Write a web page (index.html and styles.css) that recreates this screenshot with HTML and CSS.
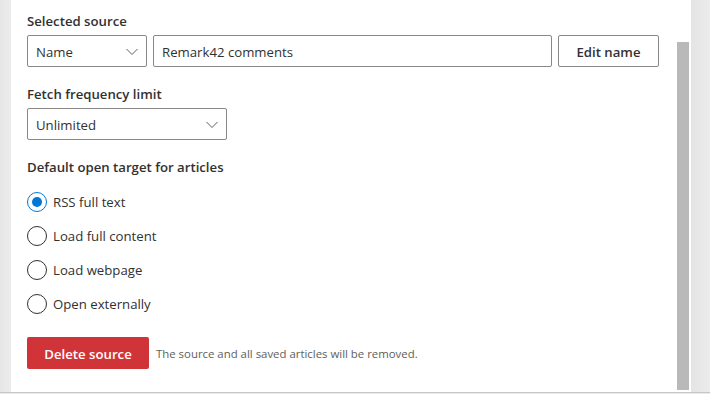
FILE: index.html
```html
<!DOCTYPE html>
<html>
<head>
<meta charset="utf-8">
<link rel="stylesheet" href="styles.css">
</head>
<body>
<div class="frame">
  <div class="gutter"></div>
  <div class="panel">
    <div class="content">
      <div class="label">Selected source</div>
      <div class="row">
        <div class="dropdown dd-name">
          <span>Name</span>
          <svg class="chev" width="12" height="8" viewBox="0 0 12 8"><path d="M0.5 1 L6 6.5 L11.5 1" fill="none" stroke="#605e5c" stroke-width="1"/></svg>
        </div>
        <div class="textfield">Remark42 comments</div>
        <div class="btn">Edit name</div>
      </div>
      <div class="label l2">Fetch frequency limit</div>
      <div class="dropdown dd-freq">
        <span>Unlimited</span>
        <svg class="chev" width="12" height="8" viewBox="0 0 12 8"><path d="M0.5 1 L6 6.5 L11.5 1" fill="none" stroke="#605e5c" stroke-width="1"/></svg>
      </div>
      <div class="label l3">Default open target for articles</div>
      <div class="radios">
        <div class="radio checked"><span class="circle"></span><span>RSS full text</span></div>
        <div class="radio"><span class="circle"></span><span>Load full content</span></div>
        <div class="radio"><span class="circle"></span><span>Load webpage</span></div>
        <div class="radio"><span class="circle"></span><span>Open externally</span></div>
      </div>
      <div class="danger-row">
        <div class="btn-danger">Delete source</div>
        <span class="note">The source and all saved articles will be removed.</span>
      </div>
    </div>
    <div class="scrolltrack"><div class="thumb"></div></div>
  </div>
  <div class="gutter right"></div>
</div>
<div class="bottom"></div>
</body>
</html>
```
FILE: styles.css
```css
html, body { margin: 0; padding: 0; }
body {
  width: 710px;
  height: 394px;
  overflow: hidden;
  background: #eaeaea;
  font-family: "Open Sans", "Noto Sans", sans-serif;
  color: #323130;
  font-size: 13.2px;
}
.frame {
  display: flex;
  height: 392px;
}
.gutter {
  width: 11px;
  background: linear-gradient(to right, #e6e6e6, #ececec);
}
.gutter.right {
  width: 19px;
  background: linear-gradient(to right, #e4e4e4, #ececec);
}
.panel {
  width: 680px;
  background: #fff;
  display: flex;
}
.content {
  flex: 1;
  padding: 11px 0 0 16px;
}
.label {
  font-weight: 600;
  line-height: 20px;
  height: 20px;
  margin-bottom: 4px;
}
.l2 { margin-top: 17px; margin-bottom: 4px; }
.l3 { margin-top: 17px; margin-bottom: 15px; }
.row {
  display: flex;
  gap: 6px;
  height: 32px;
}
.dropdown {
  box-sizing: border-box;
  height: 32px;
  border: 1px solid #8a8886;
  border-radius: 2px;
  display: flex;
  align-items: center;
  justify-content: space-between;
  padding: 1px 8px 0 8px;
}
.dd-name { width: 120px; }
.dd-freq { width: 200px; }
.textfield {
  box-sizing: border-box;
  width: 399px;
  height: 32px;
  border: 1px solid #8a8886;
  border-radius: 2px;
  display: flex;
  align-items: center;
  padding: 2px 0 0 8px;
}
.btn {
  box-sizing: border-box;
  width: 101px;
  height: 32px;
  border: 1px solid #8a8886;
  border-radius: 2px;
  display: flex;
  align-items: center;
  justify-content: center;
  font-weight: 600;
  padding-top: 2px;
}
.radios {
  display: flex;
  flex-direction: column;
  gap: 14px;
}
.radio {
  display: flex;
  align-items: center;
  height: 20px;
  gap: 6px;
}
.circle {
  box-sizing: border-box;
  width: 20px;
  height: 20px;
  border: 1px solid #323130;
  border-radius: 50%;
  display: flex;
  align-items: center;
  justify-content: center;
}
.radio.checked .circle { border-color: #0078d4; }
.radio.checked .circle::after {
  content: "";
  width: 10px;
  height: 10px;
  border-radius: 50%;
  background: #0078d4;
}
.danger-row {
  margin-top: 23px;
  display: flex;
  align-items: center;
  gap: 7px;
}
.btn-danger {
  box-sizing: border-box;
  width: 122px;
  height: 32px;
  background: #d13438;
  color: #fff;
  border-radius: 2px;
  display: flex;
  align-items: center;
  justify-content: center;
  font-weight: 600;
  padding-top: 1px;
}
.note {
  font-size: 11.4px;
  color: #605e5c;
}
.scrolltrack {
  width: 14px;
  padding-top: 42px;
  padding-bottom: 2px;
  box-sizing: border-box;
  display: flex;
}
.thumb {
  width: 12px;
  background: #b9b9b9;
}
.bottom {
  height: 1px;
  background: #c6c6c6;
}
```
